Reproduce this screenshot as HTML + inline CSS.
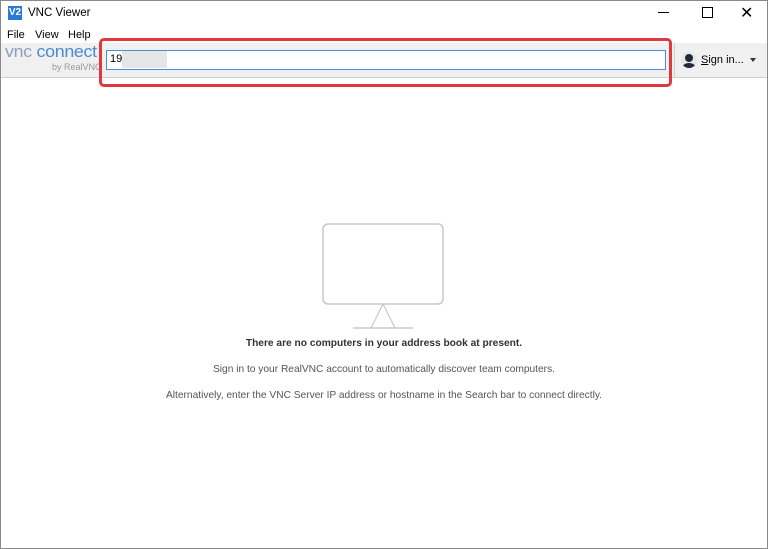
<!DOCTYPE html><html><head><style>
body{margin:0;width:768px;height:549px;overflow:hidden;background:#fff;font-family:"Liberation Sans",sans-serif;position:relative}
.a{position:absolute}
.c{left:0;width:768px;text-align:center;font-size:10.2px}
</style></head><body>
<div class="a" style="left:0;top:0;width:766px;height:547px;border:1px solid #8a8a8a"></div>
<div class="a" style="left:8px;top:6px;width:14px;height:14px;background:#2a79d6;color:#fff;font-size:10px;line-height:14px;text-align:center;font-weight:bold">V2</div>
<div class="a" style="left:28px;top:7px;font-size:11.5px;color:#000">VNC Viewer</div>
<div class="a" style="left:658px;top:12px;width:11px;height:1px;background:#000"></div>
<div class="a" style="left:702px;top:7px;width:9px;height:9px;border:1px solid #000"></div>
<div class="a" style="left:740px;top:3px;font-size:16px;color:#000">✕</div>
<div class="a" style="left:7px;top:29px;font-size:11px;color:#000">File</div>
<div class="a" style="left:35px;top:29px;font-size:11px;color:#000">View</div>
<div class="a" style="left:68px;top:29px;font-size:11px;color:#000">Help</div>
<div class="a" style="left:1px;top:43px;width:766px;height:34px;background:#f0f0f0;border-bottom:1px solid #d0d0d0"></div>
<div class="a" style="left:5px;top:42px;font-size:17px;color:#8aa0bd;letter-spacing:-0.3px;transform:scaleX(1.05);transform-origin:left">vnc <span style="color:#4a8ad4">connect</span></div>
<div class="a" style="left:52px;top:62px;font-size:9px;color:#999">by RealVNC</div>
<div class="a" style="left:106px;top:50px;width:558px;height:18px;border:1px solid #4a90d9;background:#fff"></div>
<div class="a" style="left:110px;top:53px;font-size:11px">192</div>
<div class="a" style="left:122px;top:51px;width:45px;height:17px;background:#e6e6e6"></div>
<div class="a" style="left:99px;top:38px;width:567px;height:43px;border:3px solid #e0383f;border-radius:5px"></div>
<div class="a" style="left:674px;top:43px;width:1px;height:34px;background:#d0d0d0"></div>
<svg class="a" style="left:681px;top:52px" width="16" height="16"><defs><clipPath id="k"><circle cx="8" cy="8" r="8"/></clipPath></defs><circle cx="8" cy="8" r="8" fill="#e8e8e8"/><g clip-path="url(#k)" fill="#1f2a3a"><circle cx="8" cy="6" r="4"/><ellipse cx="8" cy="16" rx="7" ry="5"/></g></svg>
<div class="a" style="left:701px;top:54px;font-size:11px;color:#000"><u>S</u>ign in...</div>
<div class="a" style="left:750px;top:58px;width:0;height:0;border-left:3px solid transparent;border-right:3px solid transparent;border-top:4px solid #333"></div>
<svg class="a" style="left:320px;top:222px" width="130" height="110"><rect x="3" y="2" width="120" height="80" rx="5" fill="none" stroke="#c8c8c8" stroke-width="1.5"/><path d="M63 82 L51 106 M63 82 L75 106" stroke="#c8c8c8" stroke-width="1.2" fill="none"/><line x1="33" y1="106" x2="93" y2="106" stroke="#c8c8c8" stroke-width="1.5"/></svg>
<div class="a c" style="top:338px;font-weight:bold;color:#333">There are no computers in your address book at present.</div>
<div class="a c" style="top:364px;color:#555">Sign in to your RealVNC account to automatically discover team computers.</div>
<div class="a c" style="top:390px;color:#555">Alternatively, enter the VNC Server IP address or hostname in the Search bar to connect directly.</div>
</body></html>
